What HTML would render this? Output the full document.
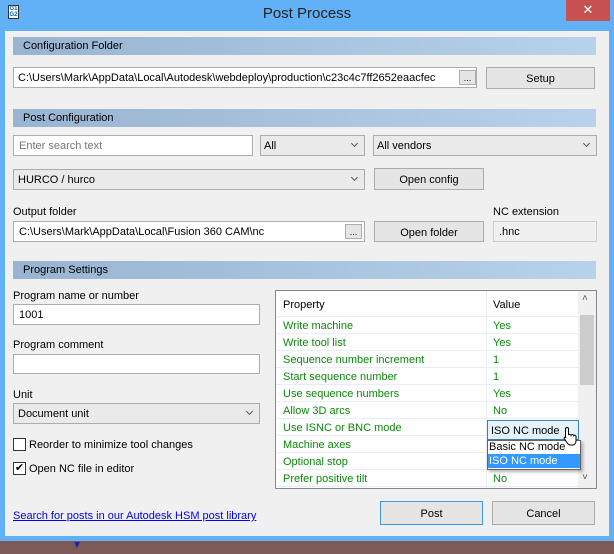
<!DOCTYPE html>
<html><head><meta charset="utf-8"><style>
*{box-sizing:border-box;margin:0;padding:0}
body{width:614px;height:554px;overflow:hidden;background:#7d5a58;font-family:"Liberation Sans",sans-serif;font-size:11px;color:#000;position:relative}
.a{position:absolute}
#frame{left:0;top:0;width:614px;height:541px;background:#62b0f5}
#client{left:5px;top:31px;width:604px;height:505px;background:#f0f0f0}
.hdr{position:absolute;left:13px;width:583px;height:18px;background:linear-gradient(to right,#99b4d1,#b9d1ea);padding:3px 0 0 10px;color:#000}
.in{position:absolute;background:#fff;border:1px solid #abadb3;padding:4px 0 0 5px;white-space:nowrap;overflow:hidden}
.sel{position:absolute;background:#eaeaea;border:1px solid #acacac;padding:4px 0 0 3px;white-space:nowrap}
.sel:after{content:"";position:absolute;right:7px;top:5px;width:4px;height:4px;border-right:1.5px solid #555;border-bottom:1.5px solid #555;transform:rotate(45deg)}
.btn{position:absolute;background:#e5e5e5;border:1px solid #acacac;text-align:center;padding-top:5px}
.lbl{position:absolute;white-space:nowrap}
.dots{position:absolute;width:17px;height:15px;border:1px solid #adadad;background:#e5e5e5;font-size:9px;text-align:center;line-height:14px}
.row{position:absolute;left:0;width:302px;height:17px;border-bottom:1px solid #e8eef5;color:#0a8a0a}
.row span{position:absolute;top:3px}
.row .k{left:7px}.row .v{left:217px}
</style></head><body>
<div id="frame" class="a"></div>
<div class="a" style="left:8px;top:5px;width:11px;height:14px;border:1px solid #333;background:#fff;font-size:6px;line-height:6px;color:#0060c0;font-weight:bold;text-align:center">G1<br>G2</div>
<div class="a" style="left:0;top:5px;width:614px;text-align:center;font-size:15px;color:#222">Post Process</div>
<div class="a" style="left:566px;top:0;width:44px;height:21px;background:#c75050;color:#fff;text-align:center;font-size:13px;line-height:20px">✕</div>
<div id="client" class="a"></div>

<div class="hdr" style="top:37px">Configuration Folder</div>
<div class="in" style="left:13px;top:67px;width:464px;height:21px;padding-left:4px">C:\Users\Mark\AppData\Local\Autodesk\webdeploy\production\c23c4c7ff2652eaacfec</div>
<div class="dots" style="left:459px;top:70px">...</div>
<div class="btn" style="left:486px;top:67px;width:109px;height:22px">Setup</div>

<div class="hdr" style="top:109px">Post Configuration</div>
<div class="in" style="left:13px;top:135px;width:240px;height:21px;color:#777">Enter search text</div>
<div class="sel" style="left:260px;top:135px;width:105px;height:21px">All</div>
<div class="sel" style="left:373px;top:135px;width:224px;height:21px">All vendors</div>
<div class="sel" style="left:13px;top:169px;width:352px;height:21px;padding-left:4px">HURCO / hurco</div>
<div class="btn" style="left:374px;top:168px;width:110px;height:22px">Open config</div>
<div class="lbl" style="left:13px;top:206px">Output folder</div>
<div class="lbl" style="left:493px;top:206px">NC extension</div>
<div class="in" style="left:13px;top:221px;width:352px;height:21px">C:\Users\Mark\AppData\Local\Fusion 360 CAM\nc</div>
<div class="dots" style="left:345px;top:224px">...</div>
<div class="btn" style="left:374px;top:221px;width:110px;height:21px">Open folder</div>
<div class="in" style="left:493px;top:221px;width:104px;height:21px;background:#f0f0f0;border-color:#ccc">.hnc</div>

<div class="hdr" style="top:261px">Program Settings</div>
<div class="lbl" style="left:13px;top:290px">Program name or number</div>
<div class="in" style="left:13px;top:304px;width:247px;height:21px">1001</div>
<div class="lbl" style="left:13px;top:339px">Program comment</div>
<div class="in" style="left:13px;top:354px;width:247px;height:20px"></div>
<div class="lbl" style="left:13px;top:389px">Unit</div>
<div class="sel" style="left:13px;top:403px;width:247px;height:21px;padding-left:4px">Document unit</div>
<div class="a" style="left:13px;top:438px;width:13px;height:13px;border:1px solid #333;background:#fff"></div>
<div class="lbl" style="left:29px;top:439px">Reorder to minimize tool changes</div>
<div class="a" style="left:13px;top:462px;width:13px;height:13px;border:1px solid #333;background:#fff;font-size:11px;line-height:11px;text-align:center">✔</div>
<div class="lbl" style="left:29px;top:463px">Open NC file in editor</div>
<div class="lbl" style="left:13px;top:510px;color:#0000ee;text-decoration:underline">Search for posts in our Autodesk HSM post library</div>

<div class="a" style="left:275px;top:290px;width:322px;height:199px;border:1px solid #828790;background:#fff;overflow:hidden">
 <div class="a" style="left:0;top:0;width:302px;height:26px;border-bottom:1px solid #e3ecf5"></div>
 <div class="a" style="left:210px;top:0;width:1px;height:199px;background:#e8eef5"></div>
 <div class="lbl" style="left:7px;top:8px">Property</div>
 <div class="lbl" style="left:217px;top:8px">Value</div>
 <div class="row" style="top:26px"><span class="k">Write machine</span><span class="v">Yes</span></div>
 <div class="row" style="top:43px"><span class="k">Write tool list</span><span class="v">Yes</span></div>
 <div class="row" style="top:60px"><span class="k">Sequence number increment</span><span class="v">1</span></div>
 <div class="row" style="top:77px"><span class="k">Start sequence number</span><span class="v">1</span></div>
 <div class="row" style="top:94px"><span class="k">Use sequence numbers</span><span class="v">Yes</span></div>
 <div class="row" style="top:111px"><span class="k">Allow 3D arcs</span><span class="v">No</span></div>
 <div class="row" style="top:128px"><span class="k">Use ISNC or BNC mode</span></div>
 <div class="row" style="top:145px"><span class="k">Machine axes</span></div>
 <div class="row" style="top:162px"><span class="k">Optional stop</span></div>
 <div class="row" style="top:179px"><span class="k">Prefer positive tilt</span><span class="v">No</span></div>
 <div class="a" style="left:302px;top:0;width:18px;height:197px;background:#f0f0f0"></div>
 <div class="a" style="left:304px;top:24px;width:14px;height:70px;background:#cdcdcd"></div>
 <div class="lbl" style="left:306px;top:2px;font-size:10px;color:#555">˄</div>
 <div class="lbl" style="left:306px;top:181px;font-size:10px;color:#555">˅</div>
 <div class="a" style="left:211px;top:129px;width:92px;height:20px;border:1px solid #3c7fb1;background:#e5f1fb;padding:4px 0 0 3px">ISO NC mode</div>
 <div class="a" style="left:211px;top:149px;width:94px;height:30px;border:1px solid #646464;background:#fff;box-shadow:2px 2px 3px rgba(0,0,0,.3)">
  <div style="height:13px;padding-left:1px;line-height:13px">Basic NC mode</div>
  <div style="height:14px;padding-left:1px;line-height:14px;background:#3399ff;color:#fff">ISO NC mode</div>
 </div>
 <svg class="a" style="left:287px;top:135px" width="16" height="20" viewBox="0 0 16 20"><path d="M4 1.5c1 0 1.5.6 1.5 1.5v6c.3-.8 2.4-.8 2.6.3.4-.9 2.4-.9 2.6.3.5-.7 2.300-.5 2.3.8v4.5c0 2.5-1.5 4.1-3.6 4.1H7.2c-1.3 0-2.1-.8-3-2L1.3 12.6c-.6-1 .5-2 1.5-1.3L2.5 12V3c0-.9.5-1.5 1.5-1.5z" fill="#fff" stroke="#000" stroke-width="1"/></svg>
</div>

<div class="btn" style="left:380px;top:501px;width:103px;height:24px;border-color:#3c9ae6;padding-top:6px">Post</div>
<div class="btn" style="left:492px;top:501px;width:103px;height:24px;padding-top:6px">Cancel</div>
<div class="a" style="left:74px;top:542px;width:6px;height:6px;background:#22a;clip-path:polygon(0 0,100% 0,50% 100%)"></div>
</body></html>
